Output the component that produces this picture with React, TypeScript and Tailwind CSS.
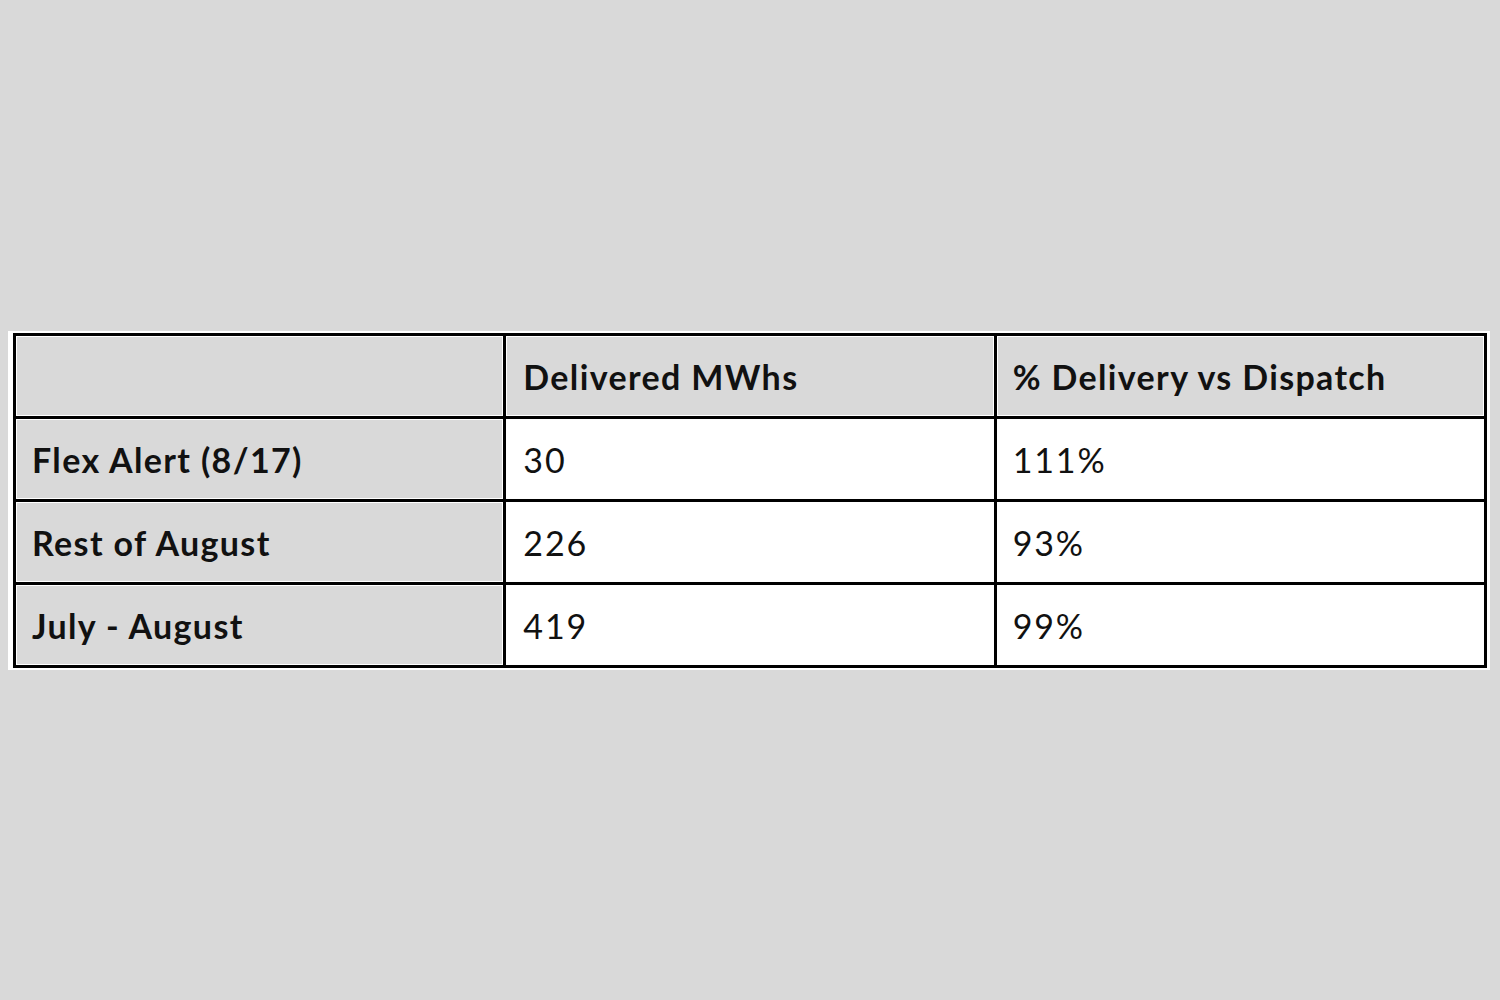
const rows = [
  { label: 'Flex Alert (8/17)', mwh: '30', pct: '111%' },
  { label: 'Rest of August', mwh: '226', pct: '93%' },
  { label: 'July - August', mwh: '419', pct: '99%' },
];

const grey = 'bg-[#d9d9d9] shadow-[inset_0_0_0_1px_#ffffff]';
const bold = 'text-[34px] font-bold tracking-[0.04em]';
const plain = 'text-[34px] tracking-[0.055em]';

export default function App() {
  return (
    <div className="w-[1500px] h-[1000px] bg-[#d9d9d9] flex items-center justify-center font-['Lato',sans-serif] text-[#111]">
      <div className="bg-white pl-[5px] pr-[3px] py-[2px] ml-[-2px] mt-[1px]">
        <div className="w-[1474px] grid grid-cols-3 gap-[3px] bg-black p-[3px]">
          {/* header */}
          <div className={`h-[80px] ${grey}`}></div>
          <div className={`h-[80px] ${grey} flex items-center pl-[17px] ${bold}`}>Delivered MWhs</div>
          <div className={`h-[80px] ${grey} flex items-center pl-[16px] ${bold}`}>% Delivery vs Dispatch</div>

          {rows.map((r) => (
            <div key={r.label} className="contents">
              <div className={`h-[80px] ${grey} flex items-center pl-[16px] ${bold}`}>{r.label}</div>
              <div className={`h-[80px] bg-white flex items-center pl-[17px] ${plain}`}>{r.mwh}</div>
              <div className={`h-[80px] bg-white flex items-center pl-[16px] ${plain}`}>{r.pct}</div>
            </div>
          ))}
        </div>
      </div>
    </div>
  );
}
